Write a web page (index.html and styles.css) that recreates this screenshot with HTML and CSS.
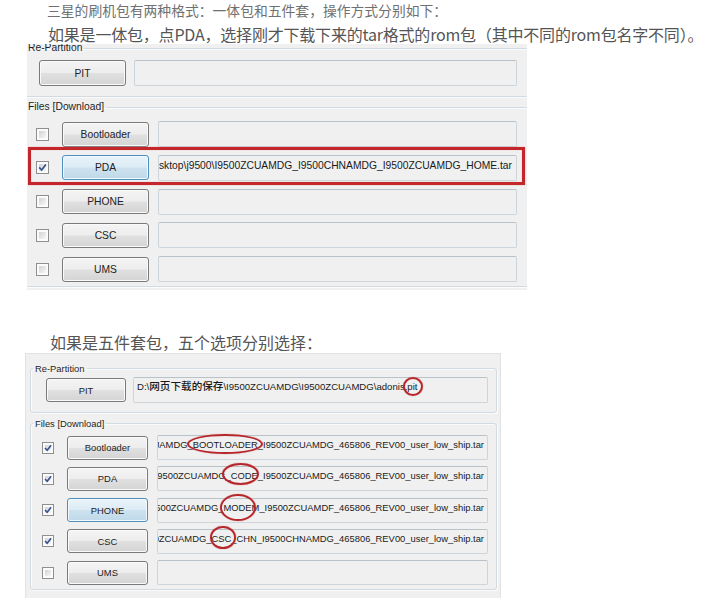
FILE: index.html
```html
<!DOCTYPE html>
<html lang="zh">
<head>
<meta charset="utf-8">
<title>三星刷机包</title>
<link rel="stylesheet" href="styles.css">
</head>
<body>
<p class="intro">三星的刷机包有两种格式：一体包和五件套，操作方式分别如下：</p>
<p class="para p1">如果是一体包，点PDA，选择刚才下载下来的tar格式的rom包（其中不同的rom包名字不同）。</p>

<div class="shot shot-a">
  <fieldset class="grp grp-rp">
    <legend>Re-Partition</legend>
    <div class="row row-pit">
      <span class="btn">PIT</span>
      <span class="field"></span>
    </div>
  </fieldset>
  <fieldset class="grp grp-files">
    <legend>Files [Download]</legend>
    <div class="rows">
      <div class="row"><span class="chk"></span><span class="btn">Bootloader</span><span class="field"></span></div>
      <div class="row"><span class="chk"><svg class="tick" viewBox="0 0 11 11"><path d="M2.2 5.4 4.6 8 8.9 2.4" fill="none" stroke="#34518f" stroke-width="1.7"/></svg></span><span class="btn hot">PDA</span><span class="field"><span class="val">:sktop\j9500\I9500ZCUAMDG_I9500CHNAMDG_I9500ZCUAMDG_HOME.tar</span></span></div>
      <div class="row"><span class="chk"></span><span class="btn">PHONE</span><span class="field"></span></div>
      <div class="row"><span class="chk"></span><span class="btn">CSC</span><span class="field"></span></div>
      <div class="row"><span class="chk"></span><span class="btn">UMS</span><span class="field"></span></div>
    </div>
  </fieldset>
  <div class="hl"></div>
</div>

<p class="para p2">如果是五件套包，五个选项分别选择：</p>

<div class="shot shot-b">
  <fieldset class="grp grp-rp">
    <legend>Re-Partition</legend>
    <div class="row row-pit">
      <span class="btn">PIT</span>
      <span class="field field-left"><span class="val">D:\<span class="cjk">网页下载的保存</span>\I9500ZCUAMDG\I9500ZCUAMDG\adonis.pit</span></span>
    </div>
  </fieldset>
  <fieldset class="grp grp-files">
    <legend>Files [Download]</legend>
    <div class="rows">
      <div class="row"><span class="chk"><svg class="tick" viewBox="0 0 11 11"><path d="M2.2 5.4 4.6 8 8.9 2.4" fill="none" stroke="#34518f" stroke-width="1.7"/></svg></span><span class="btn">Bootloader</span><span class="field"><span class="val">JAMDG_BOOTLOADER_I9500ZCUAMDG_465806_REV00_user_low_ship.tar</span></span></div>
      <div class="row"><span class="chk"><svg class="tick" viewBox="0 0 11 11"><path d="M2.2 5.4 4.6 8 8.9 2.4" fill="none" stroke="#34518f" stroke-width="1.7"/></svg></span><span class="btn">PDA</span><span class="field"><span class="val">9500ZCUAMDG_CODE_I9500ZCUAMDG_465806_REV00_user_low_ship.tar</span></span></div>
      <div class="row"><span class="chk"><svg class="tick" viewBox="0 0 11 11"><path d="M2.2 5.4 4.6 8 8.9 2.4" fill="none" stroke="#34518f" stroke-width="1.7"/></svg></span><span class="btn hot">PHONE</span><span class="field"><span class="val">500ZCUAMDG_MODEM_I9500ZCUAMDF_465806_REV00_user_low_ship.tar</span></span></div>
      <div class="row"><span class="chk"><svg class="tick" viewBox="0 0 11 11"><path d="M2.2 5.4 4.6 8 8.9 2.4" fill="none" stroke="#34518f" stroke-width="1.7"/></svg></span><span class="btn">CSC</span><span class="field"><span class="val">0ZCUAMDG_CSC_CHN_I9500CHNAMDG_465806_REV00_user_low_ship.tar</span></span></div>
      <div class="row"><span class="chk"></span><span class="btn">UMS</span><span class="field"></span></div>
    </div>
  </fieldset>
  <span class="ring ring-pit"></span>
  <span class="ring ring-boot"></span>
  <span class="ring ring-code"></span>
  <span class="ring ring-modem"></span>
  <span class="ring ring-csc"></span>
</div>
</body>
</html>
```

FILE: styles.css
```css
* { box-sizing: border-box; }

body {
  margin: 0;
  background: #fff;
  font-family: "Noto Sans CJK SC", sans-serif;
}

.intro {
  margin: 0;
  padding: 3px 0 0 47px;
  font-size: 13.8px;
  line-height: 15px;
  color: #707070;
  white-space: nowrap;
}

.para {
  margin: 6px 0 0;
  padding-left: 48px;
  font-size: 16px;
  line-height: 20px;
  color: #555;
  white-space: nowrap;
}

.p1 { letter-spacing: -0.2px; }

.p2 {
  margin-top: 42px;
  padding-left: 50px;
}

/* screenshot panels */
.shot {
  position: relative;
  overflow: hidden;
  background: #f0f0f0;
  font-family: "Liberation Sans", Arial, "Noto Sans CJK SC", sans-serif;
  color: #1e1e1e;
}

.shot-a {
  margin-left: 27px;
  width: 500px;
  height: 246px;
  font-size: 10.3px;
}

.shot-b {
  margin: 1px 0 0 25px;
  width: 476px;
  height: 245px;
  border: 1px solid #e2e2e2;
  border-bottom: 0;
  font-size: 9.4px;
}

.grp {
  margin: 0;
  padding: 0;
  min-width: 0;
  border: 1px solid #d3dbe0;
  border-radius: 3px;
  box-shadow: inset 1px 1px 0 #fbfbfb, 1px 1px 0 #fbfbfb;
}

.grp legend {
  padding: 0 2px;
  white-space: nowrap;
}

.row {
  display: flex;
  align-items: center;
}

.rows {
  display: flex;
  flex-direction: column;
}

/* shot A geometry */
.shot-a .grp legend { line-height: 12px; margin-left: 4px; }

.shot-a .grp-rp {
  margin: -2px -10px 0 -6px;
}
.shot-a .row-pit {
  padding: 6px 19px 10px 17px;
  gap: 8px;
}
.shot-a .row-pit .btn { width: 87px; height: 26px; }

.shot-a .grp-files {
  margin: 4px -10px 0 -6px;
}
.shot-a .rows {
  padding: 8px 19px 4px 14px;
  gap: 7.75px;
}
.shot-a .rows .row { height: 26px; }
.shot-a .rows .btn { width: 87px; height: 25px; margin: 0 9px 0 13px; }
.shot-a .field { height: 26px; }
.shot-a .val { padding: 4px 4px 0 0; line-height: 12px; }

.hl {
  position: absolute;
  left: 1px;
  top: 103px;
  width: 497px;
  height: 38px;
  border: 3px solid #c3262b;
  box-shadow: 0 0 1px #e08080, inset 0 0 1px #e08080;
}

/* shot B geometry */
.shot-b .grp legend { line-height: 11px; margin-left: 2px; }

.shot-b .grp-rp {
  margin: 9px 3px 0 4px;
}
.shot-b .row-pit {
  padding: 3px 8px 9px 15px;
  gap: 7px;
}
.shot-b .row-pit .btn { width: 80px; height: 24px; }

.shot-b .grp-files {
  margin: 5px 3px 0 4px;
}
.shot-b .rows {
  padding: 6px 8px 4px 11px;
  gap: 6.25px;
}
.shot-b .rows .row { height: 25px; }
.shot-b .rows .btn { width: 81px; height: 24px; margin: 0 9px 0 13px; }
.shot-b .row-pit .field { height: 26px; }
.shot-b .rows .field { height: 25px; }
.shot-b .val { padding: 3px 3px 0 3px; line-height: 11px; }
.shot-b .field-left .val { padding-top: 2px; font-size: 9.6px; line-height: 12px; }
.cjk { font-size: 10.6px; font-weight: 500; }

/* controls */
.btn {
  flex: none;
  display: flex;
  align-items: center;
  justify-content: center;
  border: 1px solid #7a7a7a;
  border-radius: 3px;
  background: linear-gradient(#f4f4f4, #ededed 48%, #e0e0e0 52%, #d4d4d4);
  box-shadow: inset 0 0 0 1px #fafafa;
  color: #222;
}

.btn.hot {
  border-color: #4f8fbd;
  background: linear-gradient(#eaf4fa, #dcebf5 48%, #cde2ef 52%, #bfd8e8);
  box-shadow: inset 0 0 0 1px #f2f9fd;
}

.field {
  flex: 1;
  min-width: 0;
  display: flex;
  justify-content: flex-end;
  align-items: flex-start;
  overflow: hidden;
  white-space: nowrap;
  border: 1px solid #cdd5db;
  border-top-color: #b8c2c9;
  border-radius: 2px;
  background: #f0f0f0;
  color: #1a1a1a;
}

.field-left { justify-content: flex-start; }

.val { flex: none; }

.chk {
  flex: none;
  display: block;
  border: 1px solid #8f8f8f;
  padding: 2px;
  background: linear-gradient(135deg, #d3d3d3, #f6f6f6) content-box, #fbfbfb;
}
.shot-a .chk { width: 13px; height: 13px; }
.shot-b .chk { width: 12px; height: 12px; }

.tick {
  display: block;
  width: 11px;
  height: 11px;
  margin: -2px;
}
.shot-b .tick { width: 10px; height: 10px; }

.ring {
  position: absolute;
  border: 2px solid #b7262b;
  border-radius: 50%;
  box-shadow: 0 0 1px #c85a5e;
}
.ring-pit { left: 377px; top: 23px; width: 20px; height: 19px; }
.ring-boot { left: 161px; top: 80px; width: 76px; height: 20px; }
.ring-code { left: 196px; top: 109px; width: 37px; height: 22px; }
.ring-modem { left: 194px; top: 140px; width: 36px; height: 27px; }
.ring-csc { left: 184px; top: 172px; width: 26px; height: 23px; }
```
